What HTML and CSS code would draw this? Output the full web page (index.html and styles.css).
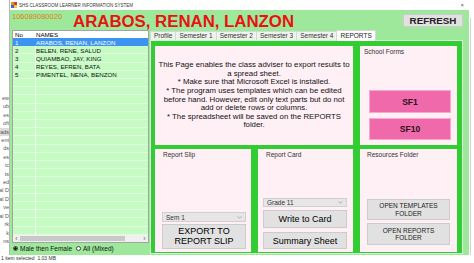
FILE: index.html
```html
<!DOCTYPE html>
<html>
<head>
<meta charset="utf-8">
<title>SHS Classroom Learner Information System</title>
<link rel="stylesheet" href="styles.css">
</head>
<body>
<div class="desk">
  <div class="nav">
    <span class="nav-item">ew</span>
    <span class="nav-item">ub</span>
    <span class="nav-item">es</span>
    <span class="nav-item">oft</span>
    <span class="nav-item hl">ads</span>
    <span class="nav-item">ent</span>
    <span class="nav-item">ds</span>
    <span class="nav-item">es</span>
    <span class="nav-item">ic</span>
    <span class="nav-item">ts</span>
    <span class="nav-item">ed</span>
    <span class="nav-item">al D</span>
    <span class="nav-item">al D</span>
    <span class="nav-item">ve</span>
    <span class="nav-item">al D</span>
    <span class="nav-item">rk</span>
    <span class="nav-item">k</span>
    <span class="nav-item">ns</span>
  </div>
  <div class="window">
    <div class="titlebar">
      <svg class="appicon" viewBox="0 0 6 6" width="6" height="6">
        <rect x="0" y="0" width="3" height="3" fill="#f08a24"/>
        <rect x="3" y="0" width="3" height="3" fill="#d93a2b"/>
        <rect x="0" y="3" width="3" height="3" fill="#2f6fd1"/>
        <rect x="3" y="3" width="3" height="3" fill="#f5c542"/>
      </svg>
      <span class="title">SHS CLASSROOM LEARNER INFORMATION SYSTEM</span>
      <span class="close">×</span>
    </div>
    <div class="wbody">
      <div class="header">
        <span class="lrn">106089080020</span>
        <span class="student">ARABOS, RENAN, LANZON</span>
        <button class="btn refresh">REFRESH</button>
      </div>
      <div class="main">
        <div class="leftcol">
          <div class="listbox">
            <div class="lhead"><span class="c1">No</span><span class="c2">NAMES</span></div>
            <div class="lrows">
              <div class="lrow sel"><span class="c1">1</span><span class="c2">ARABOS, RENAN, LANZON</span></div>
              <div class="lrow"><span class="c1">2</span><span class="c2">BELEN, RENE, SALUD</span></div>
              <div class="lrow"><span class="c1">3</span><span class="c2">QUIAMBAO, JAY, KING</span></div>
              <div class="lrow"><span class="c1">4</span><span class="c2">REYES, EFREN, BATA</span></div>
              <div class="lrow"><span class="c1">5</span><span class="c2">PIMENTEL, NENA, BENZON</span></div>
            </div>
            <div class="hscroll">
              <span class="arr">‹</span>
              <span class="thumb"></span>
              <span class="track"></span>
              <span class="arr">›</span>
            </div>
          </div>
          <div class="radios">
            <span class="radio on"></span><span class="rlabel">Male then Female</span>
            <span class="radio"></span><span class="rlabel">All (Mixed)</span>
          </div>
        </div>
        <div class="tabctl">
          <div class="tabs">
            <span class="tab">Profile</span>
            <span class="tab">Semester 1</span>
            <span class="tab">Semester 2</span>
            <span class="tab">Semester 3</span>
            <span class="tab">Semester 4</span>
            <span class="tab active">REPORTS</span>
          </div>
          <div class="page">
            <div class="panel info">
              <p>This Page enables the class adviser to export results to<br>a spread sheet.<br>* Make sure that Microsoft Excel is installed.<br>* The program uses templates which can be edited<br>before hand. However, edit only text parts but do not<br>add or delete rows or columns.<br>* The spreadsheet will be saved on the REPORTS<br>folder.</p>
            </div>
            <div class="panel forms">
              <span class="plabel">School Forms</span>
              <div class="sfbtns">
                <button class="sf sf1">SF1</button>
                <button class="sf sf10">SF10</button>
              </div>
            </div>
            <div class="panel slip">
              <span class="plabel">Report Slip</span>
              <div class="combo"><span>Sem 1</span><svg class="chev" viewBox="0 0 6 4" width="5" height="3"><path d="M0.5 0.5 L3 3 L5.5 0.5" fill="none" stroke="#888" stroke-width="0.8"/></svg></div>
              <button class="btn export">EXPORT TO<br>REPORT SLIP</button>
            </div>
            <div class="panel card">
              <span class="plabel">Report Card</span>
              <div class="combo"><span>Grade 11</span><svg class="chev" viewBox="0 0 6 4" width="5" height="3"><path d="M0.5 0.5 L3 3 L5.5 0.5" fill="none" stroke="#888" stroke-width="0.8"/></svg></div>
              <button class="btn write">Write to Card</button>
              <button class="btn summary">Summary Sheet</button>
            </div>
            <div class="panel res">
              <span class="plabel">Resources Folder</span>
              <button class="btn folder tpl">OPEN TEMPLATES<br>FOLDER</button>
              <button class="btn folder rep">OPEN REPORTS<br>FOLDER</button>
            </div>
          </div>
        </div>
      </div>
    </div>
  </div>
  <div class="edge"></div>
</div>
<div class="status">1 item selected &nbsp;1.03 MB</div>
</body>
</html>
```

FILE: styles.css
```css
* { box-sizing: border-box; margin: 0; padding: 0; }
html, body { width: 474px; height: 263px; overflow: hidden; }
body { background: #fff; font-family: "Liberation Sans", Arial, sans-serif; color: #000; }

.desk { display: flex; height: 255px; }

.nav { width: 9px; overflow: hidden; display: flex; flex-direction: column; align-items: flex-end; padding-top: 94px; font-size: 5.5px; line-height: 8.4px; color: #555; white-space: nowrap; }
.nav-item { display: block; }
.nav-item.hl { background: #dcdcdc; align-self: stretch; text-align: right; }

.window { width: 460px; display: flex; flex-direction: column; border-left: 1px solid #b8b8b8; }
.titlebar { height: 10px; flex: none; display: flex; align-items: center; padding-left: 1px; background: #fff; }
.appicon { flex: none; margin-right: 2px; }
.title { font-size: 4.5px; color: #333; white-space: nowrap; }
.close { margin-left: auto; margin-right: 5px; font-size: 6px; color: #555; line-height: 6px; }

.wbody { flex: 1; background: #9ee89c; padding: 0 6px 1px 2px; display: flex; flex-direction: column; }

.header { height: 20px; flex: none; display: flex; align-items: flex-start; }
.lrn { font-size: 7.5px; line-height: 8px; color: #e0800f; margin-top: 3px; }
.student { font-size: 16.8px; font-weight: bold; line-height: 17px; color: #e81212; margin-top: 3px; margin-left: 11px; white-space: nowrap; }

.btn { background: #e1e1e1; border: 1px solid #cccccc; font-family: "Liberation Sans", Arial, sans-serif; color: #000; display: flex; align-items: center; justify-content: center; text-align: center; }
.refresh { margin-left: auto; margin-top: 4px; width: 60px; height: 13px; font-size: 9.8px; font-weight: bold; color: #222; }

.main { flex: 1; display: flex; gap: 1px; min-height: 0; }

.leftcol { width: 137px; display: flex; flex-direction: column; }
.listbox { height: 213px; border: 1px solid #a3a3a3; background: #c6fcc4; display: flex; flex-direction: column; font-size: 6.2px; }
.lhead { height: 7px; background: #fff; display: flex; align-items: center; }
.c1 { width: 23px; padding-left: 2px; flex: none; }
.c2 { white-space: nowrap; }
.lrows { flex: 1; background-image: linear-gradient(to right, transparent 22px, rgba(255,255,255,0.7) 22px, rgba(255,255,255,0.7) 23px, transparent 23px), repeating-linear-gradient(to bottom, transparent 0, transparent 7.2px, rgba(255,255,255,0.45) 7.2px, rgba(255,255,255,0.45) 8.2px); }
.lrow { height: 8.2px; display: flex; align-items: center; color: #111; }
.lrow.sel { background: #3d94f0; color: #fff; }
.hscroll { height: 7px; background: #f0f0f0; display: flex; align-items: center; font-size: 7px; color: #666; }
.arr { width: 7px; text-align: center; line-height: 7px; }
.thumb { width: 105px; height: 5px; background: #c9c9c9; }
.track { flex: 1; }

.radios { flex: 1; display: flex; align-items: center; font-size: 6.5px; padding-left: 1px; }
.radio { width: 5px; height: 5px; border-radius: 50%; border: 0.8px solid #444; background: #fff; margin-right: 2px; flex: none; }
.radio.on { background: radial-gradient(circle, #222 0 1.3px, #fff 1.5px); }
.rlabel { margin-right: 4px; color: #111; }

.tabctl { flex: 1; display: flex; flex-direction: column; }
.tabs { height: 10px; display: flex; align-items: flex-end; position: relative; z-index: 1; }
.tab { font-size: 6.5px; height: 9px; line-height: 8px; padding: 0 3px; background: #eef3ee; border: 1px solid #cfdccf; border-bottom: none; margin-right: -1px; color: #333; white-space: nowrap; }
.tab.active { background: #fff; height: 11px; line-height: 10px; margin-bottom: -1px; color: #222; }

.page { flex: 1; background: #32cd32; border: 1px solid #d8f3d8; padding: 5px 5px 1px 4px; display: grid; grid-template-columns: 96px 95px 97px; grid-template-rows: 99px 1fr; gap: 4px 7px; }

.panel { background: #fff0f5; display: flex; flex-direction: column; }
.plabel { font-size: 6.5px; color: #333; padding: 2px 0 0 4px; line-height: 7px; }

.info { grid-column: 1 / 3; align-items: center; justify-content: center; }
.info p { font-size: 7.8px; line-height: 8.6px; text-align: center; color: #111; }

.forms { padding: 0 6px 5px 0; }
.sfbtns { margin-top: auto; display: flex; flex-direction: column; gap: 5px; padding-left: 9px; }
.sf { background: #f06aab; border: 1px solid #f7a9cc; font-family: "Liberation Sans", Arial, sans-serif; font-size: 8.5px; font-weight: bold; color: #2a1020; display: flex; align-items: center; justify-content: center; }
.sf1 { height: 23px; }
.sf10 { height: 22px; }

.combo { background: #e6e6e6; border: 1px solid #d0d0d0; height: 10px; font-size: 6.5px; color: #333; display: flex; align-items: center; justify-content: space-between; padding: 0 3px; }

.slip { padding: 0 5px 3px 7px; }
.slip .plabel { margin-left: -3px; }
.slip .combo { margin-top: auto; }
.export { margin-top: 2px; height: 25px; font-size: 9px; line-height: 9.5px; }

.card { padding: 0 6px 3px 5px; }
.card .plabel { margin-left: -1px; }
.card .combo { margin-top: auto; height: 9px; }
.write { margin-top: 3px; height: 18px; font-size: 9px; }
.summary { margin-top: 4px; height: 17px; font-size: 9px; }

.res { padding: 0 7px 7px 7px; }
.res .plabel { margin-left: -4px; }
.folder { font-size: 6.5px; line-height: 7.5px; color: #222; }
.tpl { margin-top: auto; height: 21px; }
.rep { margin-top: 3px; height: 22px; }

.edge { flex: 1; padding-top: 18px; display: flex; }
.edge::before { content: ""; display: block; width: 1px; margin-left: 1px; background: #d4d4d4; }

.status { height: 8px; font-size: 5px; line-height: 6px; color: #333; padding-left: 1px; white-space: pre; }
```
